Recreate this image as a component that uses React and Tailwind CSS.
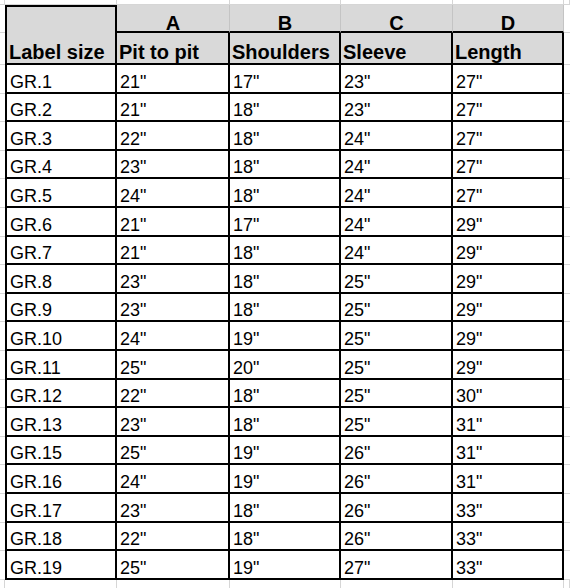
const ROWS = [
  ["GR.1", "21\"", "17\"", "23\"", "27\""],
  ["GR.2", "21\"", "18\"", "23\"", "27\""],
  ["GR.3", "22\"", "18\"", "24\"", "27\""],
  ["GR.4", "23\"", "18\"", "24\"", "27\""],
  ["GR.5", "24\"", "18\"", "24\"", "27\""],
  ["GR.6", "21\"", "17\"", "24\"", "29\""],
  ["GR.7", "21\"", "18\"", "24\"", "29\""],
  ["GR.8", "23\"", "18\"", "25\"", "29\""],
  ["GR.9", "23\"", "18\"", "25\"", "29\""],
  ["GR.10", "24\"", "19\"", "25\"", "29\""],
  ["GR.11", "25\"", "20\"", "25\"", "29\""],
  ["GR.12", "22\"", "18\"", "25\"", "30\""],
  ["GR.13", "23\"", "18\"", "25\"", "31\""],
  ["GR.15", "25\"", "19\"", "26\"", "31\""],
  ["GR.16", "24\"", "19\"", "26\"", "31\""],
  ["GR.17", "23\"", "18\"", "26\"", "33\""],
  ["GR.18", "22\"", "18\"", "26\"", "33\""],
  ["GR.19", "25\"", "19\"", "27\"", "33\""],
];

const LETTERS = ["A", "B", "C", "D"];
const TITLES = ["Pit to pit", "Shoulders", "Sleeve", "Length"];

export default function App() {
  return (
    <div className="w-[570px] h-[588px] overflow-hidden bg-white text-black font-['Liberation_Sans',Arial,sans-serif]">
      <div className="grid h-full grid-cols-[5px_112px_113px_111px_112px_111px_1fr] grid-rows-[5px_28px_32px_repeat(18,28.6px)_1fr]">
        {/* top gutter */}
        {Array.from({ length: 7 }).map((_, i) => (
          <div key={"t" + i} className="border-b border-r border-[#d6d6d6]" />
        ))}

        {/* header row 1 */}
        <div className="border-b border-[#d6d6d6]" />
        <div className="row-span-2 flex items-end pl-[2px] pb-[1px] bg-[#d9d9d9] border-2 border-black text-[20px] leading-[20px] font-bold">
          Label size
        </div>
        {LETTERS.map((l) => (
          <div
            key={l}
            className="flex items-end justify-center bg-[#d9d9d9] border-r border-r-[#c4c4c4] border-b-2 border-b-black text-[20px] leading-[16px] font-bold"
          >
            {l}
          </div>
        ))}
        <div className="border-b border-[#d6d6d6]" />

        {/* header row 2 */}
        <div className="border-b border-[#d6d6d6]" />
        {TITLES.map((t) => (
          <div
            key={t}
            className="flex items-end pl-[2px] pb-[1px] bg-[#d9d9d9] border-r-2 border-b-2 border-black text-[20px] leading-[20px] font-bold whitespace-nowrap"
          >
            {t}
          </div>
        ))}
        <div className="border-b border-[#d6d6d6]" />

        {/* data rows */}
        {ROWS.map((r) => (
          <div key={r[0]} className="contents">
            <div className="border-b border-[#d6d6d6]" />
            {r.map((v, j) => (
              <div
                key={j}
                className={
                  "flex items-end pl-[3px] pb-[1px] border-r-2 border-b-2 border-black text-[18px] leading-[18px] " +
                  (j === 0 ? "border-l-2" : "")
                }
              >
                {v}
              </div>
            ))}
            <div className="border-b border-[#d6d6d6]" />
          </div>
        ))}

        {/* bottom gutter */}
        {Array.from({ length: 7 }).map((_, i) => (
          <div key={"b" + i} className="border-r border-[#d6d6d6]" />
        ))}
      </div>
    </div>
  );
}
